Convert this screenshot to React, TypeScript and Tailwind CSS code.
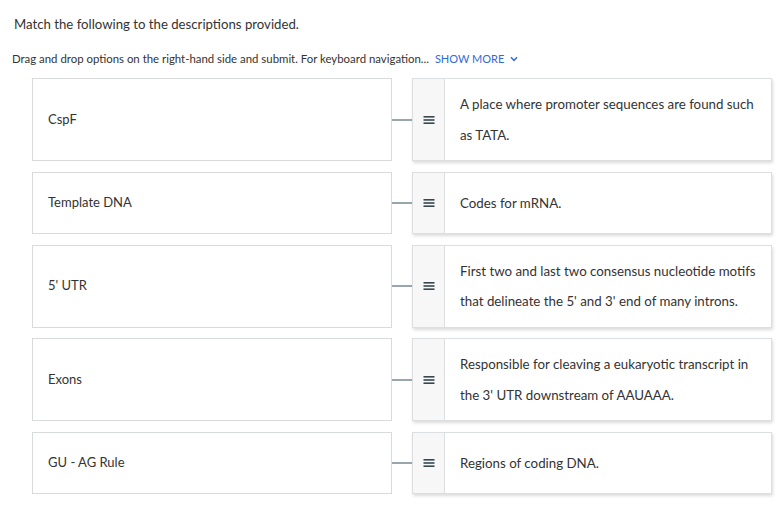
import React from "react";

const rows = [
  { left: "CspF", right: "A place where promoter sequences are found such as TATA." },
  { left: "Template DNA", right: "Codes for mRNA." },
  { left: "5' UTR", right: "First two and last two consensus nucleotide motifs that delineate the 5' and 3' end of many introns." },
  { left: "Exons", right: "Responsible for cleaving a eukaryotic transcript in the 3' UTR downstream of AAUAAA." },
  { left: "GU - AG Rule", right: "Regions of coding DNA." },
];

function Handle() {
  return (
    <svg width="12" height="10" viewBox="0 0 12 10" fill="none">
      <rect x="0.5" y="1" width="11" height="1.6" fill="#37474f" />
      <rect x="0.5" y="4.2" width="11" height="1.6" fill="#37474f" />
      <rect x="0.5" y="7.4" width="11" height="1.6" fill="#37474f" />
    </svg>
  );
}

export default function App() {
  return (
    <div className="w-[784px] h-[510px] bg-white text-[#333] overflow-hidden" style={{ fontFamily: "Lato, 'Open Sans', sans-serif" }}>
      <div className="pl-[14px] pt-[14px] text-[13.2px] leading-[20px] text-[#333]">Match the following to the descriptions provided.</div>
      <div className="pl-[12px] pt-[17px] flex items-center text-[11.4px] leading-[16px] text-[#333]">
        <span>Drag and drop options on the right-hand side and submit. For keyboard navigation...</span>
        <span className="ml-[6px] text-[11px] text-[#2f6bd9] flex items-center gap-[6px]">
          SHOW MORE
          <svg width="8" height="6" viewBox="0 0 8 6" fill="none">
            <path d="M1 1.2 L4 4.4 L7 1.2" stroke="#2f6bd9" strokeWidth="1.5" />
          </svg>
        </span>
      </div>
      <div className="pl-[32px] pt-[11px] flex flex-col gap-[10.5px]">
        {rows.map((r, i) => (
          <div key={i} className="flex items-stretch">
            <div className="w-[360px] border border-[#d8dadc] bg-white flex items-center pl-[15px] text-[13px]">
              {r.left}
            </div>
            <div className="w-[20px] flex items-center">
              <div className="w-full h-[2px] bg-[#9aa6ae]" />
            </div>
            <div className="w-[360px] min-h-[62.5px] flex border border-[#dcdee0] bg-white shadow-[1px_2px_3px_rgba(0,0,0,0.14)]">
              <div className="w-[32px] shrink-0 bg-[#f7f7f8] border-r border-[#dcdee0] flex items-center justify-center">
                <Handle />
              </div>
              <div className="flex-1 flex items-center pl-[15px] pr-[10px] py-[10px] text-[13.3px] leading-[30.5px]">
                {r.right}
              </div>
            </div>
          </div>
        ))}
      </div>
    </div>
  );
}
